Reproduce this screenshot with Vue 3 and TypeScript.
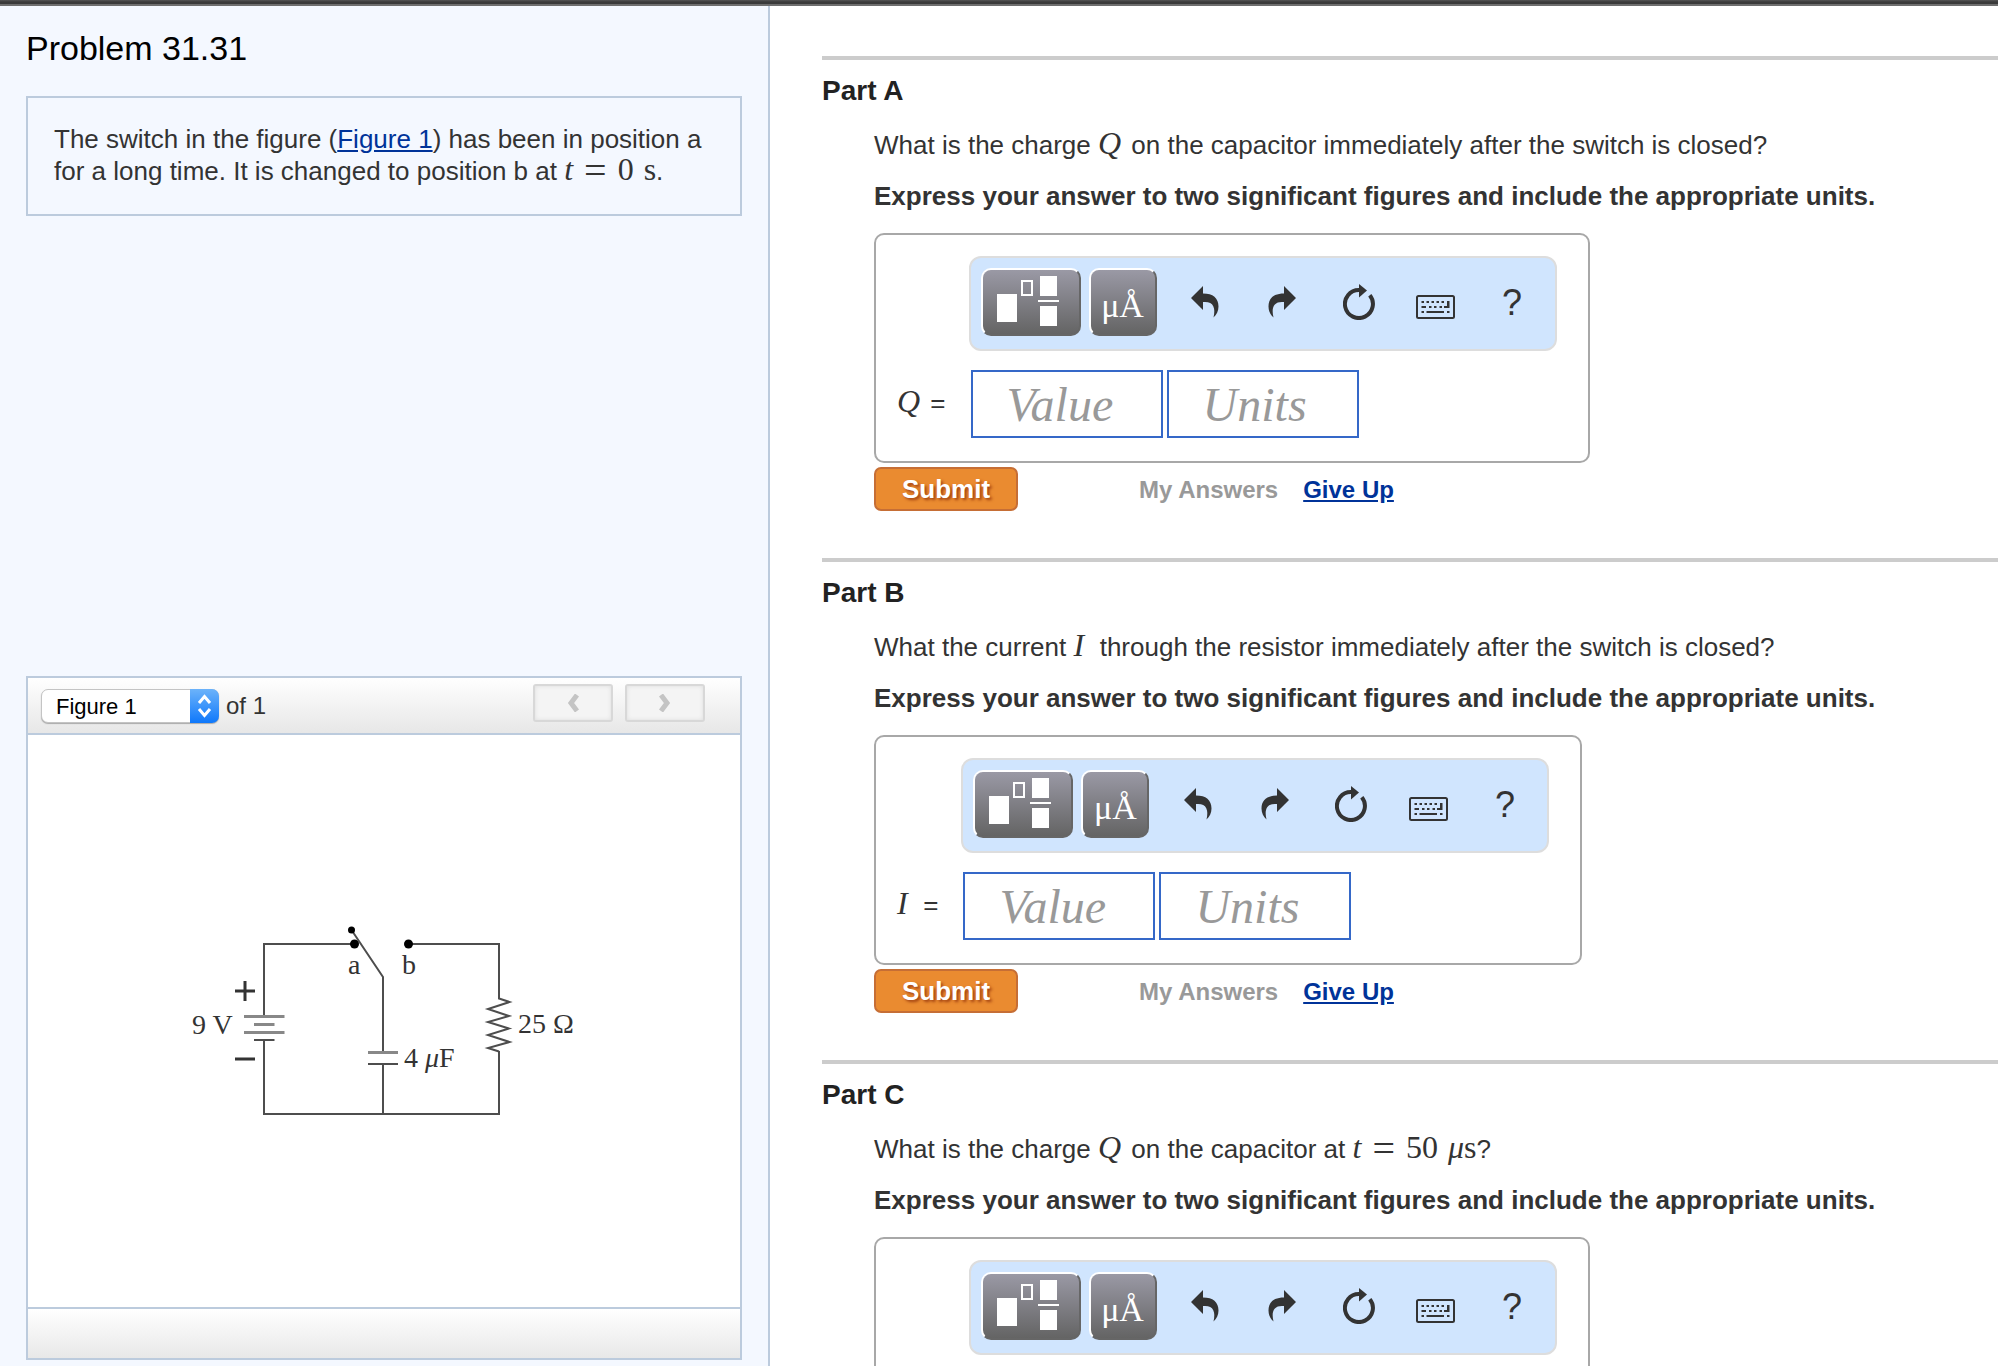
<script setup lang="ts">
import { ref } from 'vue'

interface Part {
  id: string
  before: string
  symbol: string
  after: string
  time?: string
  timePrefix?: string
  closing?: string
}

const parts: Part[] = [
  {
    id: 'A',
    before: 'What is the charge ',
    symbol: 'Q',
    after: ' on the capacitor immediately after the switch is closed?',
  },
  {
    id: 'B',
    before: 'What the current ',
    symbol: 'I',
    after: ' through the resistor immediately after the switch is closed?',
  },
  {
    id: 'C',
    before: 'What is the charge ',
    symbol: 'Q',
    after: ' on the capacitor at ',
    time: '50',
    timePrefix: 'μ',
    closing: '?',
  },
]

const figure = ref('Figure 1')
</script>

<template>
  <div class="page">
    <div class="topbar"></div>
    <div class="columns">
      <aside class="side">
        <h1 class="title">Problem 31.31</h1>
        <p class="statement">The switch in the figure (<a href="#figure">Figure 1</a>) has been in position a for a long time. It is changed to position b at <span class="math"><i>t</i><span class="rel">=</span>0<span class="unit">s</span></span>.</p>

        <section id="figure" class="figure">
          <header class="figure-head">
            <span class="picker">
              <select v-model="figure" aria-label="Figure">
                <option>Figure 1</option>
              </select>
              <svg class="picker-arrows" width="29" height="34" viewBox="0 0 29 34" aria-hidden="true">
                <path d="M9 14 L14.500 7.500 L20 14 M9 20 L14.500 26.500 L20 20" />
              </svg>
            </span>
            <span class="count">of 1</span>
            <button class="nav" type="button" aria-label="Previous figure" disabled>
              <svg width="12" height="18" viewBox="0 0 12 18"><path d="M10 1 L4 9 L10 17" /></svg>
            </button>
            <button class="nav" type="button" aria-label="Next figure" disabled>
              <svg width="12" height="18" viewBox="0 0 12 18"><path d="M2 1 L8 9 L2 17" /></svg>
            </button>
          </header>
          <div class="figure-body">
            <svg class="circuit" width="430" height="240" viewBox="-1 1 430 240" role="img" aria-label="Circuit diagram">
              <g class="wire">
                <path d="M184 44 H94 V116" />
                <path d="M94 140 V214 H329 V151" />
                <path d="M238.500 44 H329 V98.500 L339.500 102 L318 109 L339 116 L318 122 L339 128.500 L318 135 L339.500 142 L318 148 L329 151.500" />
                <path d="M181.500 30 L213 77 V152" />
                <path d="M213 164 V214" />
                <path d="M198 164 H228 M84 140 H104.500" />
              </g>
              <path class="plate" d="M198 152.500 H228 M74 116.500 H114.500 M84 124.500 H104.500 M74 132.500 H114.500" />
              <path class="sign" d="M65 91 H85 M75 81 V101 M65 159 H85" />
              <circle cx="181.500" cy="30" r="3.500" />
              <circle cx="184.500" cy="44" r="4.500" />
              <circle cx="238.500" cy="44" r="4.500" />
              <text x="22" y="134">9 V</text>
              <text x="178" y="74">a</text>
              <text x="232" y="74">b</text>
              <text x="234" y="167">4 <tspan font-style="italic">μ</tspan>F</text>
              <text x="348" y="133">25 Ω</text>
            </svg>
          </div>
          <footer class="figure-foot"></footer>
        </section>
      </aside>

      <main class="work">
        <section v-for="part in parts" :key="part.id" class="part">
          <h2>Part {{ part.id }}</h2>
          <div class="part-body">
            <p class="question">{{ part.before }}<i class="sym">{{ part.symbol }}</i>{{ part.after }}<span v-if="part.time" class="math"><i>t</i><span class="rel">=</span>{{ part.time }}<i class="unit">{{ part.timePrefix }}</i>s</span>{{ part.closing }}</p>
            <p class="hint">Express your answer to two significant figures and include the appropriate units.</p>

            <form @submit.prevent>
              <div class="answer">
                <div class="toolbar">
                  <button class="key key-wide" type="button" aria-label="Templates">
                    <svg width="100" height="68" viewBox="0 0 100 68">
                      <path d="M16 26h20v28H16z M59 8h17v20H59z M59 38h17v20H59z M57 32h21v2H57z" fill="#fff" />
                      <path d="M41 13h10v14H41z" fill="none" stroke="#fff" stroke-width="2" />
                    </svg>
                  </button>
                  <button class="key key-text" type="button" aria-label="Symbols">μÅ</button>
                  <div class="tools">
                    <button type="button" aria-label="Undo">
                      <svg width="28" height="32" viewBox="0 0 28 32"><path d="M0 12 L12 0 V7.500 C22 7.500 27.500 12 27.500 20.500 C27.500 25 25.500 29 22.500 31.500 C25 21 22 15 12 16 V24 Z" /></svg>
                    </button>
                    <button type="button" aria-label="Redo">
                      <svg width="28" height="32" viewBox="0 0 28 32"><path d="M28 12 L16 0 V7.500 C6 7.500 .500 12 .500 20.500 C.500 25 2.500 29 5.500 31.500 C3 21 6 15 16 16 V24 Z" /></svg>
                    </button>
                    <button type="button" aria-label="Reset">
                      <svg width="32" height="36" viewBox="0 0 32 36">
                        <path d="M26.800 11.200 A14 14 0 1 1 16 6" fill="none" stroke="#333" stroke-width="4" />
                        <path d="M16 0 L24 6.500 L16 13.500 Z" />
                      </svg>
                    </button>
                    <button type="button" aria-label="Keyboard">
                      <svg width="39" height="34" viewBox="0 -10 39 34">
                        <rect x="1" y="1" width="37" height="22" rx="1.500" fill="none" stroke="#333" stroke-width="2" />
                        <path d="M5.500 6h2.500v2h-2.500z M10.500 6h2.500v2h-2.500z M15.500 6h2.500v2h-2.500z M20.500 6h2.500v2h-2.500z M25.500 6h2.500v2h-2.500z M31 6h2.500v7h-5.500v-2h3z M5.500 11h4.500v2h-4.500z M13 11h2.500v2h-2.500z M18 11h2.500v2h-2.500z M23.500 11h2.500v2h-2.500z M5.500 16h2.500v2h-2.500z M10.500 16h17.500v2h-17.500z M31 16h2.500v2h-2.500z" />
                      </svg>
                    </button>
                    <button class="help" type="button" aria-label="Help">?</button>
                  </div>
                </div>
                <label class="quantity" :for="'value-' + part.id"><i class="sym">{{ part.symbol }}</i> =</label>
                <div class="fields">
                  <input :id="'value-' + part.id" type="text" placeholder="Value" />
                  <input type="text" placeholder="Units" :aria-label="'Units of ' + part.symbol" />
                </div>
              </div>
              <div class="actions">
                <button class="submit" type="submit">Submit</button>
                <span class="mine">My Answers</span>
                <a href="#give-up">Give Up</a>
              </div>
            </form>
          </div>
        </section>
      </main>
    </div>
  </div>
</template>

<style>
body {
  margin: 0;
}
</style>

<style scoped>
.page {
  display: flex;
  flex-direction: column;
  height: 100vh;
  overflow: hidden;
  background: #fff;
  color: #333;
  font: 26px/32px "Liberation Sans", Arial, sans-serif;
}
.page * {
  box-sizing: border-box;
}
h1, h2, p {
  margin: 0;
}
button, input, select {
  margin: 0;
  padding: 0;
  font-family: inherit;
}
a {
  color: #039;
}

.topbar {
  flex: none;
  height: 6px;
  background: linear-gradient(#555 0, #3a3a3a 2px, #3a3a3a 4px, #6e6e6e 4px);
}
.columns {
  display: flex;
  flex: 1;
  min-height: 0;
}

.side {
  display: flex;
  flex-direction: column;
  flex: none;
  width: 38.54%;
  padding: 22px 26px 6px;
  border-right: 2px solid #bccbdd;
  background: #f4f8ff;
}
.title {
  margin-bottom: 28px;
  color: #000;
  font-size: 34px;
  font-weight: 400;
  line-height: 40px;
}
.statement {
  padding: 25px 26px 27px;
  border: 2px solid #bccbdd;
}

.math, .sym {
  font-family: "Liberation Serif", "Times New Roman", serif;
  font-size: 32px;
  line-height: 0;
}
.math {
  white-space: nowrap;
}
.rel {
  margin: 0 11px;
  font-size: 40px;
  vertical-align: -4px;
}
.unit {
  margin-left: 10px;
}
.sym {
  display: inline-block;
  min-width: 19px;
  padding-right: 3px;
}

.figure {
  display: flex;
  flex-direction: column;
  flex: 0 1 684px;
  margin-top: auto;
  border: 2px solid #bccbdd;
  background: #fff;
}
.figure-head {
  display: flex;
  align-items: center;
  flex: none;
  height: 57px;
  padding: 0 35px 0 13px;
  border-bottom: 2px solid #bccbdd;
  background: linear-gradient(#fff, #e7e7e7);
}
.picker {
  position: relative;
  width: 178px;
  height: 34px;
}
.picker select {
  width: 100%;
  height: 100%;
  padding: 0 32px 0 14px;
  border: 1px solid #c4c4c4;
  border-radius: 7px;
  appearance: none;
  background: #fff;
  box-shadow: 0 1px 1px #aaa;
  color: #000;
  font-size: 22px;
}
.picker-arrows {
  position: absolute;
  top: 0;
  right: 0;
  border-radius: 0 7px 7px 0;
  background: linear-gradient(#6cb3fa, #0f78fb);
  pointer-events: none;
}
.picker-arrows path {
  fill: none;
  stroke: #fff;
  stroke-width: 3;
}
.count {
  margin: 0 auto 0 7px;
  font-size: 24px;
}
.nav {
  display: flex;
  align-items: center;
  justify-content: center;
  width: 80px;
  height: 38px;
  margin: 0 0 5px 12px;
  border: 2px solid #d8d8d8;
  border-radius: 3px;
  background: #f4f4f4;
  box-shadow: inset 0 0 4px #ddd;
}
.nav path {
  fill: none;
  stroke: #c4c4c4;
  stroke-width: 5;
}
.figure-body {
  display: flex;
  align-items: center;
  justify-content: center;
  flex: 1;
  min-height: 0;
}
.figure-foot {
  flex: none;
  height: 51px;
  border-top: 2px solid #bccbdd;
  background: linear-gradient(#fff, #e8e8e8);
}
.wire {
  fill: none;
  stroke: #4d4d4d;
  stroke-width: 2;
}
.plate {
  stroke: #888;
  stroke-width: 3;
}
.sign {
  stroke: #333;
  stroke-width: 3;
}
.circuit circle {
  fill: #000;
}
.circuit text {
  fill: #333;
  font: 28px "Liberation Serif", "Times New Roman", serif;
}

.work {
  flex: 1;
  min-width: 0;
  padding: 50px 0 0 52px;
  overflow-y: auto;
  scrollbar-width: none;
}
.part {
  margin-bottom: 47px;
  padding-top: 15px;
  border-top: 4px solid #ccc;
}
.part h2 {
  color: #222;
  font-size: 28px;
  line-height: 32px;
}
.part-body {
  padding: 22px 0 0 52px;
}
.hint {
  margin: 19px 0 21px;
  font-weight: 700;
}
.answer {
  display: grid;
  grid-template-columns: auto 588px;
  width: fit-content;
  padding: 21px 31px 23px 21px;
  border: 2px solid #a8a8a8;
  border-radius: 10px;
  row-gap: 19px;
}
.toolbar {
  display: flex;
  grid-column: 2;
  gap: 8px;
  padding: 10px 4px 13px 10px;
  border: 2px solid #ddd;
  border-radius: 12px;
  background: #d0e5fe;
}
.key {
  display: flex;
  align-items: center;
  justify-content: center;
  width: 68px;
  height: 68px;
  border: 2px solid;
  border-color: #fff #666 #666 #fff;
  border-radius: 10px;
  background: linear-gradient(#9a99a5, #646464);
  color: #fff;
  font: 34px/40px "Liberation Serif", "Times New Roman", serif;
}
.key-wide {
  width: 100px;
}
.key-text {
  padding-top: 8px;
}
.key svg {
  flex: none;
}
.tools {
  display: flex;
  flex: 1;
  padding-left: 2px;
}
.tools button {
  display: flex;
  align-items: center;
  justify-content: center;
  flex: 1;
  border: 0;
  background: none;
  color: #333;
  fill: #333;
}
.tools .help {
  padding-top: 2px;
  font-size: 36px;
}
.quantity {
  align-self: center;
  padding: 0 23px 3px 0;
  white-space: nowrap;
}
.fields {
  display: flex;
  gap: 4px;
  padding-left: 2px;
}
.fields input {
  width: 192px;
  height: 68px;
  padding: 0 0 0 34px;
  border: 2px solid #3568c8;
  background: #fff;
  color: #333;
  font: italic 48px "Liberation Serif", "Times New Roman", serif;
}
.fields input::placeholder {
  color: #999;
}
.actions {
  display: flex;
  align-items: center;
  margin-top: 4px;
  font-size: 24px;
  font-weight: 700;
}
.actions span, .actions a {
  padding-top: 2px;
}
.submit {
  width: 144px;
  height: 44px;
  border: 2px solid #c66e35;
  border-radius: 7px;
  background: #ea8b30;
  color: #fff;
  font-size: 26px;
  font-weight: 700;
  text-shadow: 2px 2px 3px #a04010;
}
.mine {
  margin: 0 25px 0 121px;
  color: #999;
}
</style>
